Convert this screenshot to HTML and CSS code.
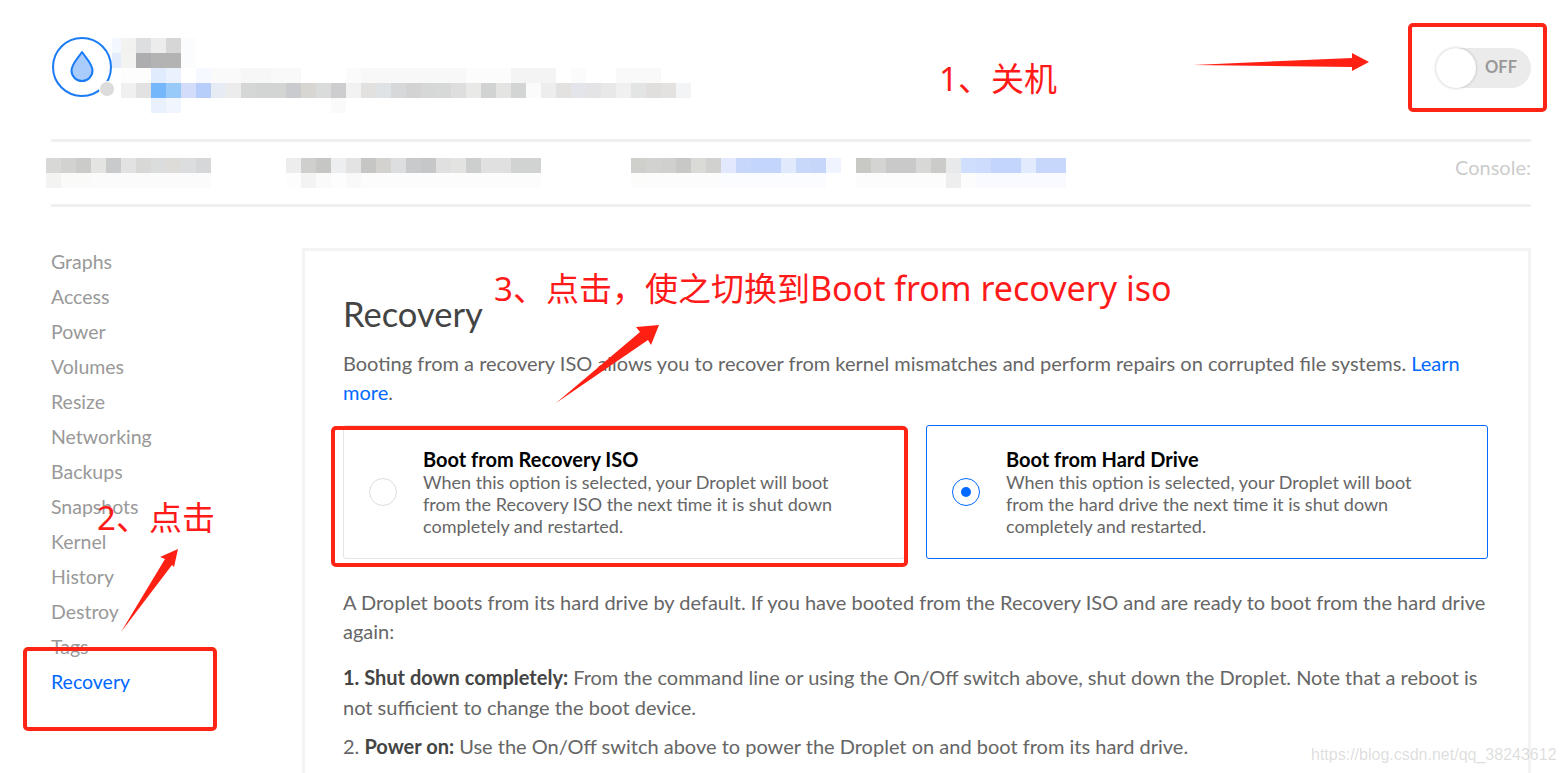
FILE: index.html
```html
<!DOCTYPE html>
<html lang="en">
<head>
<meta charset="utf-8">
<title>Recovery</title>
<link rel="stylesheet" href="styles.css">
</head>
<body>
<div class="page">
  <header class="top">
    <div class="logo">
      <svg class="logo-icon" width="60" height="60" viewBox="0 0 60 60">
        <circle cx="30" cy="30" r="29" fill="none" stroke="#1a7bf5" stroke-width="2"/>
        <path d="M30 15C26 21 19.500 27 19.500 33.500A10.500 10.500 0 0 0 40.500 33.500C40.500 27 34 21 30 15Z" fill="#a9ccfd" stroke="#1a7bf5" stroke-width="2" stroke-linejoin="round"/>
      </svg>
      <span class="status-dot"></span>
    </div>
    <div class="name-mosaic">
      <div class="m m-a1"></div>
      <div class="m m-a2"></div>
      <div class="m m-a3"></div>
      <div class="m m-a4"></div>
      <div class="m m-a5"></div>
    </div>
    <div class="toggle"><span class="knob"></span><span class="toggle-label">OFF</span></div>
  </header>

  <div class="meta">
    <div class="meta-block mb1"><div class="m m-b1"></div><div class="m m-b1l"></div></div>
    <div class="meta-block mb2"><div class="m m-b2"></div><div class="m m-b2l"></div></div>
    <div class="meta-block mb3"><div class="m m-b3"></div><div class="m m-b3l"></div></div>
    <div class="meta-block mb4"><div class="m m-b4"></div><div class="m m-b4l"></div></div>
    <span class="console">Console:</span>
  </div>

  <main class="main">
    <nav class="side">
      <a>Graphs</a>
      <a>Access</a>
      <a>Power</a>
      <a>Volumes</a>
      <a>Resize</a>
      <a>Networking</a>
      <a>Backups</a>
      <a>Snapshots</a>
      <a>Kernel</a>
      <a>History</a>
      <a>Destroy</a>
      <a>Tags</a>
      <a class="active">Recovery</a>
    </nav>
    <section class="card">
      <h1>Recovery</h1>
      <p class="intro">Booting from a recovery ISO allows you to recover from kernel mismatches and perform repairs on corrupted file systems. <a class="link">Learn more</a>.</p>
      <div class="options">
        <div class="option">
          <span class="radio"></span>
          <div class="opt-text">
            <strong>Boot from Recovery ISO</strong>
            <span>When this option is selected, your Droplet will boot from the Recovery ISO the next time it is shut down completely and restarted.</span>
          </div>
        </div>
        <div class="option selected">
          <span class="radio"><i></i></span>
          <div class="opt-text">
            <strong>Boot from Hard Drive</strong>
            <span>When this option is selected, your Droplet will boot from the hard drive the next time it is shut down completely and restarted.</span>
          </div>
        </div>
      </div>
      <p class="p1">A Droplet boots from its hard drive by default. If you have booted from the Recovery ISO and are ready to boot from the hard drive again:</p>
      <p class="p2"><b>1. Shut down completely:</b> From the command line or using the On/Off switch above, shut down the Droplet. Note that a reboot is not sufficient to change the boot device.</p>
      <p class="p3">2. <b>Power on:</b> Use the On/Off switch above to power the Droplet on and boot from its hard drive.</p>
    </section>
  </main>
</div>

<div class="red-box box-toggle"></div>
<div class="red-box box-option"></div>
<div class="red-box box-nav"></div>
<svg class="arrows" width="1564" height="773" viewBox="0 0 1564 773">
  <polygon points="1193,65 1352,58 1352,53 1369,62 1352,71 1352,67"/>
  <polygon points="556,403 640,332 636,327 659,325 651,345 648,340"/>
  <polygon points="121,632 165,559 160,557 178,549 174,567 172,565"/>
</svg>
<div class="note note1">1、关机</div>
<div class="note note2">2、点击</div>
<div class="note note3">3、点击，使之切换到<span class="note-latin">Boot from recovery iso</span></div>
<div class="watermark">https://blog.csdn.net/qq_38243612</div>
</body>
</html>
```
FILE: styles.css
```css
* { box-sizing: border-box; }
html, body { margin: 0; height: 773px; overflow: hidden; background: #fff; }
body { font-family: Lato, "Liberation Sans", sans-serif; color: #666; position: relative; }

.page { padding: 0 33px 0 51px; height: 773px; overflow: hidden; }

/* header */
.top { display: flex; height: 142px; border-bottom: 3px solid #f0f0f0; }
.logo { position: relative; width: 60px; height: 60px; margin: 37px 0 0 1px; flex: none; }
.logo-icon { display: block; }
.status-dot { position: absolute; left: 47px; top: 44px; width: 16px; height: 16px; border-radius: 50%; background: #dcdcdc; border: 1px solid #fff; }
.name-mosaic { width: 579px; margin-top: 38px; flex: none; }
.m { height: 15px; }
.m-a1 { width: 84px; background: linear-gradient(to right, #f3f7fe 0 9px, #f2f2f0 9px 24px, #dddee0 24px 39px, #ececec 39px 54px, #d6d6d6 54px 69px, #fbfcfe 69px 84px); }
.m-a2 { width: 84px; background: linear-gradient(to right, #e3ecfb 0 9px, #f3f3f1 9px 24px, #adadaf 24px 39px, #b3b3b3 39px 69px, #fbfcfe 69px 84px); }
.m-a3 { background: linear-gradient(to right, #fff 0 9px, #fdfdfd 9px 39px, #e0ebfd 39px 54px, #ebf2fe 54px 69px, #fff 69px 84px, #f6f9ff 84px 99px, #fafafa 99px 129px, #f7f7f7 129px 159px, #f9f9f9 159px 189px, #fff 189px 234px, #fbfbfb 234px 249px, #f8f8f8 249px 354px, #fcfcfc 354px 399px, #f4f4f4 399px 444px, #fff 444px 459px, #fbfbfb 459px 474px, #fff 474px 504px, #f9f9f9 504px 549px, #fff 549px 579px); }
.m-a4 { background: linear-gradient(to right, #fff 0 9px, #f0f0f0 9px 24px, #e2e2e2 24px 39px, #74b7fb 39px 54px, #98caf9 54px 69px, #d4dcfb 69px 84px, #b7cefa 84px 99px, #e6ebf4 99px 114px, #ececec 114px 129px, #d5d6d6 129px 144px, #d3d5d5 144px 174px, #c9cbce 174px 189px, #d7d6d3 189px 204px, #dadcdb 204px 219px, #cdcdcf 219px 234px, #f2f2f2 234px 249px, #e2e1df 249px 264px, #e0e3e6 264px 279px, #d6d8da 279px 294px, #d3d3d3 294px 309px, #d6d7d7 309px 324px, #d7d9d8 324px 339px, #dedede 339px 354px, #e9e9e7 354px 369px, #d1d3d2 369px 384px, #e4e4e2 384px 399px, #d3d5d4 399px 414px, #fbfbfb 414px 429px, #ededed 429px 444px, #e4e2e0 444px 459px, #e4e5ea 459px 474px, #e4e4e6 474px 489px, #e8e8e8 489px 504px, #f0f0f0 504px 519px, #e3e4e4 519px 534px, #e0dfdd 534px 549px, #e3e2e0 549px 564px, #f3f4f6 564px 579px); }
.m-a5 { width: 234px; background: linear-gradient(to right, #fff 0 39px, #e9f0fe 39px 54px, #f1f5fe 54px 69px, #fff 69px 219px, #fafafa 219px 234px); }

.toggle { margin: 48px 0 0 auto; width: 95px; height: 40px; border-radius: 20px; background: #ebebeb; display: flex; align-items: center; flex: none; }
.knob { width: 40px; height: 40px; border-radius: 50%; background: #fff; box-shadow: 0 0 3px rgba(0, 0, 0, .25); flex: none; }
.toggle-label { margin: -2px 0 0 9px; font-size: 16.500px; font-weight: 700; color: #999; }

/* meta row */
.meta { display: flex; align-items: flex-start; height: 65px; border-bottom: 3px solid #f0f0f0; padding-top: 16px; }
.meta-block { flex: none; }
.mb1 { width: 165px; margin-left: -5px; }
.mb2 { width: 255px; margin-left: 75px; }
.mb3 { width: 210px; margin-left: 90px; }
.mb4 { width: 210px; margin-left: 15px; }
.m-b1 { background: linear-gradient(to right, #d8d8d6 0 15px, #d2d2d0 15px 30px, #cbcbc9 30px 45px, #e4e4e2 45px 60px, #c9cacc 60px 75px, #e2e2e2 75px 90px, #d8d9d6 90px 105px, #dbdcdc 105px 120px, #dedcd9 120px 135px, #dcdddf 135px 150px, #d6d7d9 150px 165px); }
.m-b1l { background: linear-gradient(to right, #f3f3f2 0 15px, #fafaf8 15px 45px, #fbfbfb 45px 165px); }
.m-b2 { background: linear-gradient(to right, #ededed 0 15px, #cfcfcd 15px 30px, #c6c6c4 30px 45px, #eceef0 45px 60px, #e3e3e3 60px 75px, #c6c6c4 75px 90px, #d3d2cf 90px 105px, #dddedf 105px 120px, #c9cacc 120px 135px, #c6c7c9 135px 150px, #dfe0df 150px 165px, #e3e4e1 165px 180px, #cdcece 180px 195px, #e0e0e0 195px 225px, #d1d3d2 225px 255px); }
.m-b2l { background: linear-gradient(to right, #fdfdfd 0 15px, #f3f3f3 15px 30px, #fafafa 30px 45px, #fdfdfd 45px 60px, #f9f9f9 60px 75px, #fcfcfc 75px 255px); }
.m-b3 { background: linear-gradient(to right, #cfcfcb 0 15px, #d2d2d1 15px 30px, #d0d0cf 30px 45px, #c8c8c6 45px 60px, #dadad7 60px 75px, #d1d2d0 75px 90px, #e2e8fd 90px 105px, #c7d7fb 105px 120px, #c4d5fc 120px 150px, #e1e9fd 150px 165px, #c8d8fb 165px 180px, #c6d6fb 180px 195px, #f0f4fe 195px 210px); }
.m-b3l { background: linear-gradient(to right, #fcfcfa 0 15px, #fbfcfb 15px 90px, #fbfcff 90px 195px, #fff 195px 210px); }
.m-b4 { background: linear-gradient(to right, #c8c9c5 0 15px, #d4d4d3 15px 30px, #c9c9c9 30px 60px, #d8d8d6 60px 75px, #cbccc9 75px 90px, #e8e9ea 90px 105px, #cfdefc 105px 120px, #cddbfc 120px 135px, #c3d5fd 135px 165px, #e2eafd 165px 180px, #c6d7fb 180px 210px); }
.m-b4l { background: linear-gradient(to right, #fcfcfc 0 90px, #eeeeee 90px 105px, #fcfcfc 105px 120px, #f8faff 120px 210px); }
.console { margin-left: auto; margin-top: -4px; font-size: 20px; line-height: 26px; color: #ccc; }

/* main */
.main { display: flex; align-items: flex-start; padding-top: 37px; }
.side { width: 251px; flex: none; display: flex; flex-direction: column; }
.side a { display: block; font-size: 19.500px; line-height: 35px; color: #999; }
.side a.active { color: #0069ff; }
.card { flex: 1; margin-top: 4px; border: 3px solid #f3f3f3; border-bottom: 0; padding: 44px 40px 0 38px; height: 560px; font-size: 20px; line-height: 29px; }
h1 { margin: 0 0 16px; font-size: 34.500px; font-weight: 400; line-height: 38px; color: #444; }
p { margin: 0; }
.link { color: #0069ff; }
.options { display: grid; grid-template-columns: 1fr 1fr; gap: 21px; margin: 18px 0 29px; }
.option { height: 134px; border: 1px solid #e5e5e5; border-radius: 3px; display: flex; align-items: center; padding-left: 25px; }
.option.selected { border-color: #0069ff; }
.radio { width: 28px; height: 28px; border-radius: 50%; border: 1px solid #ddd; flex: none; display: flex; align-items: center; justify-content: center; }
.selected .radio { border-color: #0069ff; }
.radio i { width: 10px; height: 10px; border-radius: 50%; background: #0069ff; }
.opt-text { margin-left: 26px; width: 440px; font-size: 18px; line-height: 22px; color: #666; }
.opt-text strong { display: block; font-size: 20px; font-weight: 700; color: #000; line-height: 24px; }
.opt-text span { display: block; }
.p1 { margin-bottom: 16px; }
.p2 { line-height: 30px; margin-bottom: 10px; }
b { font-weight: 700; color: #444; }

/* annotations */
.red-box { position: absolute; border: 4px solid #ff2516; border-radius: 5px; }
.box-toggle { left: 1408px; top: 23px; width: 139px; height: 89px; }
.box-option { left: 331px; top: 426px; width: 577px; height: 141px; }
.box-nav { left: 23px; top: 647px; width: 194px; height: 84px; }
.arrows { position: absolute; left: 0; top: 0; }
.arrows polygon { fill: #ff2014; }
.note { position: absolute; font-family: "Noto Sans", "Noto Sans CJK SC", sans-serif; font-size: 33px; line-height: 44px; color: #ff1a1a; white-space: nowrap; }
.note-latin { font-size: 34px; }
.note1 { left: 939px; top: 57px; }
.note2 { left: 97px; top: 496px; }
.note3 { left: 494px; top: 266px; }
.watermark { position: absolute; left: 1311px; top: 745px; font-family: "Liberation Sans", sans-serif; font-size: 16px; line-height: 20px; color: rgba(120, 120, 120, .25); white-space: nowrap; }
```
